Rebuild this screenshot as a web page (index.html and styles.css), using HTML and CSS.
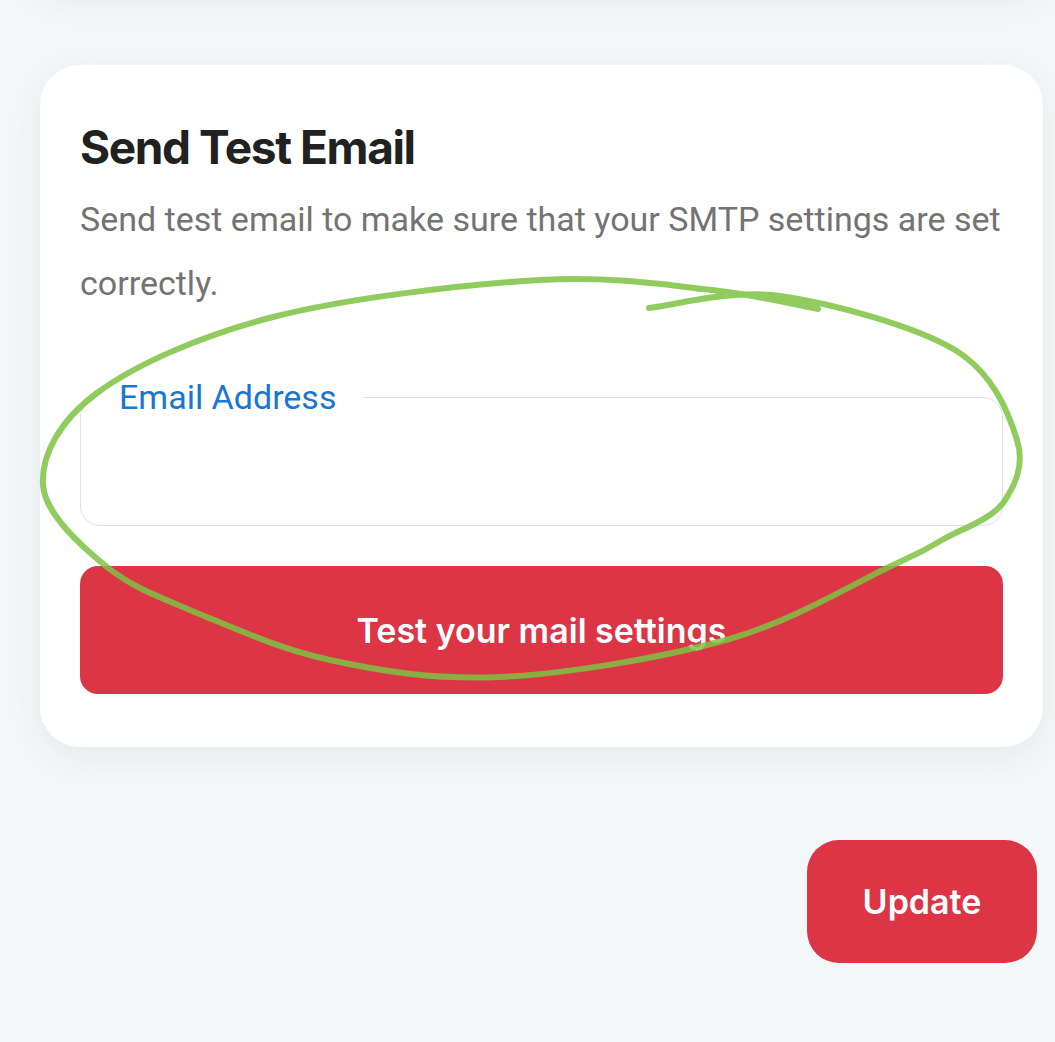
FILE: index.html
```html
<!DOCTYPE html>
<html>
<head>
  <meta name="viewport" content="width=device-width, initial-scale=1.0">
  <meta charset="UTF-8">
  <title>Mail settings</title>
  <link rel="stylesheet" href="styles.css">
</head>
<body>

  <div class="page">
    <div class="prev-card"></div>

    <div class="card">
      <h2 class="card-title">Send Test Email</h2>
      <p class="card-text">Send test email to make sure that your SMTP settings are set correctly.</p>

      <fieldset class="field">
        <legend>Email Address</legend>
        <input type="email" class="field-input">
      </fieldset>

      <button class="btn btn-block">Test your mail settings</button>
    </div>

    <div class="actions">
      <button class="btn btn-update">Update</button>
    </div>
  </div>

  <!-- hand drawn marker around the email field -->
  <svg class="scribble" width="1055" height="1042" viewBox="0 0 1055 1042">
    <path d="M649 308 C671 306 729 289 780 296 C831 303 915 326 955 350 C994 374 1009 414 1017 440 C1025 465 1015 486 1003 503 C990 520 961 529 942 540 C923 551 925 550 889 567 C853 584 791 622 726 640 C661 658 566 674 500 677 C434 680 380 671 330 660 C279 649 234 628 197 613 C160 597 133 588 107 567 C81 546 45 514 43 485 C41 456 59 421 97 393 C135 365 199 336 273 317 C347 298 467 284 540 280 C613 276 666 285 712 290 C758 295 800 306 818 309" />
  </svg>

</body>
</html>
```

FILE: styles.css
```css
* {
  margin: 0;
  padding: 0;
  box-sizing: border-box;
}

body {
  background: #f4f7f8;
  font-family: "Roboto", "Liberation Sans", sans-serif;
  overflow: hidden;
}

.page {
  padding: 0 12px 0 40px;
}

.prev-card {
  height: 40px;
  margin-top: -60px;
  margin-bottom: 85px;
  border-radius: 40px;
  background: #fff;
  box-shadow: 0 12px 40px rgba(40, 60, 70, 0.1);
}

.card {
  background: #fff;
  border-radius: 40px;
  padding: 55px 40px 53px;
  box-shadow: 0 10px 36px rgba(40, 60, 70, 0.07);
}

.card-title {
  font-family: "Inter", sans-serif;
  font-size: 46px;
  font-weight: 700;
  line-height: 1.2;
  letter-spacing: -1.4px;
  color: #212121;
}

.card-text {
  margin-top: 12px;
  font-size: 34px;
  line-height: 64px;
  color: #737373;
}

.field {
  margin-top: 62px;
  min-width: 0;
  border: 1.5px solid #e0e0e0;
  border-radius: 20px;
  padding: 0 10px;
}

.field legend {
  padding: 0 28px;
  font-size: 34px;
  color: #1976d2;
}

.field-input {
  display: block;
  width: 100%;
  height: 108px;
  border: 0;
  outline: 0;
  background: transparent;
  font-family: inherit;
  font-size: 30px;
}

.btn {
  border: 0;
  outline: 0;
  background: #dc3545;
  color: #fff;
  font-family: "Inter", sans-serif;
  font-weight: 600;
  font-size: 34px;
  cursor: pointer;
}

.btn-block {
  display: block;
  width: 100%;
  height: 128px;
  margin-top: 40px;
  border-radius: 18px;
}

.actions {
  display: flex;
  justify-content: flex-end;
  padding: 93px 6px 0 0;
}

.btn-update {
  width: 230px;
  height: 123px;
  border-radius: 32px;
}

.scribble {
  position: absolute;
  top: 0;
  left: 0;
  pointer-events: none;
}

.scribble path {
  fill: none;
  stroke: #7cc242;
  stroke-width: 6;
  stroke-linecap: round;
  stroke-linejoin: round;
  opacity: 0.85;
}
```
